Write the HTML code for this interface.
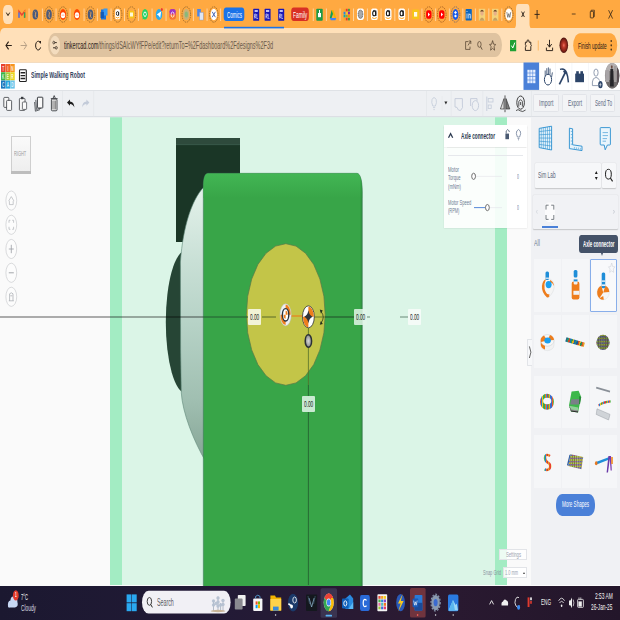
<!DOCTYPE html><html><head><meta charset="utf-8"><title>Tinkercad</title><style>
html,body{margin:0;padding:0;}
body{width:620px;height:620px;overflow:hidden;position:relative;background:#fafafa;font-family:"Liberation Sans",sans-serif;}
.a{position:absolute;}
.t{position:absolute;white-space:nowrap;transform-origin:0 50%;transform:scaleX(.5625);line-height:1;}
svg{position:absolute;left:0;top:0;overflow:visible;}
#tabbar{left:0;top:0;width:620px;height:40px;background:#ffa941;}
#addr{left:0;top:28.4px;width:620px;height:33.8px;background:#ffe0b9;border-top-left-radius:4px 6px;}
#pill{left:48px;top:33px;width:454px;height:24px;background:#dfc3a0;border-radius:7px/12px;}
#hdr{left:0;top:62px;width:620px;height:28px;background:#fff;border-top:1px solid #f3dcc0;box-sizing:border-box;}
#tool{left:0;top:90px;width:620px;height:27.3px;background:#eef0f3;border-bottom:1px solid #dcdfe4;border-top:1px solid #dfe2e6;box-sizing:border-box;}
#canvas{left:0;top:117px;width:531px;height:469px;background:#fafafa;overflow:hidden;}
#side{left:531px;top:117px;width:89px;height:468px;background:#f0f1f4;}
#task{left:0;top:585.5px;width:620px;height:34.5px;background:linear-gradient(90deg,#1b1830 0%,#221a36 35%,#2b1a32 65%,#23162a 100%);}
.sep{position:absolute;top:8px;width:1px;height:13px;background:#ffd29a;}
.card{position:absolute;background:#f5f6f8;width:26.6px;height:52.8px;}
.btn{position:absolute;background:#f3f4f6;border:1px solid #e2e4e9;box-sizing:border-box;border-radius:1.5px;}
</style></head><body>
<div id="tabbar" class="a"></div><div id="addr" class="a"></div><div id="pill" class="a"></div><div id="hdr" class="a"></div><div id="tool" class="a"></div>
<div id="canvas" class="a"><svg width="531" height="468" viewBox="0 117 531 468">
<defs>
<linearGradient id="wheelg" gradientUnits="userSpaceOnUse" x1="0" y1="187" x2="0" y2="460"><stop offset="0" stop-color="#e4f2eb"/><stop offset="0.27" stop-color="#c9e0d6"/><stop offset="0.49" stop-color="#b7d3c7"/><stop offset="0.78" stop-color="#a0bfb1"/><stop offset="1" stop-color="#86a596"/></linearGradient>
<linearGradient id="bodytop" x1="0" y1="0" x2="0" y2="1"><stop offset="0" stop-color="#42b654"/><stop offset="1" stop-color="#38a548"/></linearGradient>
<radialGradient id="greyb" cx="0.5" cy="0.5" r="0.5"><stop offset="0" stop-color="#d8d8d8"/><stop offset="1" stop-color="#8a8a8a"/></radialGradient>
</defs>
<rect x="110" y="117" width="397" height="468" fill="#a3ecc3"/>
<rect x="122" y="117" width="373" height="468" fill="#dbf5e7"/>
<rect x="0" y="117" width="531" height="0.3" fill="#e3e6ea"/>
<rect x="176" y="138" width="64" height="104" fill="#1a3626"/>
<rect x="176" y="138" width="64" height="6.5" fill="#2e4a3c"/>
<rect x="176" y="144.3" width="64" height="0.8" fill="#3e5e50"/>
<ellipse cx="186" cy="322" rx="20.2" ry="71.5" fill="#264535"/>
<path d="M206 185 C193 196 183 225 180.4 262 L180.6 350 L181.3 393 C182.5 412 193 440 206 462 Z" fill="url(#wheelg)" stroke="#5f8878" stroke-width="0.6"/>
<path d="M203.3 590 V185 C203.3 178 205 173.3 208 173.3 H357 C360 173.3 362.3 180 362.3 192 V590 Z" fill="#38a548" stroke="#3f6f5c" stroke-width="0.5"/>
<path d="M203.5 198 V185 C203.5 178 205 173.5 208 173.5 H357 C360 173.5 362.1 180 362.1 192 V198 Z" fill="url(#bodytop)"/>
<path d="M360.6 177 C361.6 180 362.2 186 362.2 192 V590 H360.6 Z" fill="#1f6a30" opacity="0.3"/>
<polygon points="285.8,243.7 296.0,246.1 305.5,253.2 313.7,264.4 319.9,279.1 323.9,296.2 325.2,314.5 323.9,332.8 319.9,349.9 313.7,364.6 305.5,375.8 296.0,382.9 285.8,385.3 275.6,382.9 266.1,375.8 257.9,364.6 251.7,349.9 247.7,332.8 246.4,314.5 247.7,296.2 251.7,279.1 257.9,264.4 266.1,253.2 275.6,246.1" fill="#c3c548" stroke="#5a7848" stroke-width="0.7"/>
<line x1="0" y1="317" x2="203" y2="317" stroke="#000" stroke-opacity="0.42" stroke-width="1.4"/>
<line x1="203" y1="317" x2="248" y2="317" stroke="#235a30" stroke-width="1"/>
<line x1="262" y1="317" x2="276" y2="317" stroke="#5a6a28" stroke-width="1"/>
<line x1="291" y1="316" x2="303" y2="316" stroke="#e8801e" stroke-width="1.2"/>
<line x1="314" y1="317" x2="325" y2="317" stroke="#6a7a28" stroke-width="1"/>
<line x1="325" y1="317" x2="354" y2="317" stroke="#235a30" stroke-width="1.2"/>
<line x1="367" y1="317" x2="370" y2="317" stroke="#6a8a78" stroke-width="1"/>
<line x1="400" y1="317" x2="408" y2="317" stroke="#6a8a78" stroke-width="1"/>
<line x1="308.4" y1="328" x2="308.4" y2="385" stroke="#55702a" stroke-width="0.8"/>
<line x1="308.4" y1="385" x2="308.4" y2="396" stroke="#235a30" stroke-width="0.8"/>
<line x1="308.4" y1="412" x2="308.4" y2="585" stroke="#235a30" stroke-width="0.8"/>
<!-- connector 1 -->
<g transform="translate(285.6 314.8)">
 <ellipse rx="5.6" ry="11" fill="#eef0f4" stroke="#b8c0cc" stroke-width="0.5"/>
 <path d="M0 0 L0 -10.2 A5.1 10.2 0 0 1 5.1 0 Z" fill="#ee7d1c"/>
 <path d="M0 0 L0 10.2 A5.1 10.2 0 0 1 -5.1 0 Z" fill="#ee7d1c"/>
 <ellipse rx="3.2" ry="6.2" fill="#fff" stroke="#2b3440" stroke-width="1.4"/>
 <path d="M0 0 L0 -4 A2 4 0 0 1 2 0 Z" fill="#ee7d1c"/>
 <path d="M0 0 L0 4 A2 4 0 0 1 -2 0 Z" fill="#ee7d1c"/>
</g>
<!-- connector 2 -->
<g transform="translate(308.4 316.8)">
 <ellipse rx="5.9" ry="11" fill="#fff" stroke="#2b3036" stroke-width="0.8"/>
 <path d="M0 0 L0 -10.4 A5.4 10.4 0 0 1 5.4 0 Z" fill="#ee7d1c"/>
 <path d="M0 0 L0 10.4 A5.4 10.4 0 0 1 -5.4 0 Z" fill="#ee7d1c"/>
 <path d="M0 -6.5 Q0.8 -1.4 4.2 0 Q0.8 1.4 0 6.5 Q-0.8 1.4 -4.2 0 Q-0.8 -1.4 0 -6.5 Z" fill="#30343a"/>
</g>
<g transform="translate(308.4 341)">
 <ellipse rx="3.2" ry="6.2" fill="url(#greyb)" stroke="#2b3036" stroke-width="1.5"/>
</g>
<path d="M321 311.5 Q325.5 317 321 323" fill="none" stroke="#2b3a22" stroke-width="0.8"/>
<path d="M319.8 309.6 l3 0.9 l-1.9 3 Z M319.8 324.8 l3 -0.9 l-1.9 -3 Z" fill="#22301c"/>
</svg>
<div class="a" style="left:247.7px;top:192px;width:13.8px;height:16px;background:#f2f3d6;border-radius:1px;"></div>
<div class="t" style="left:249.79999999999998px;top:195.5px;font-size:8.8px;color:#222;transform:scaleX(.54);">0.00</div>
<div class="a" style="left:353.8px;top:192px;width:12.8px;height:16px;background:rgba(225,245,232,0.85);border-radius:1px;"></div>
<div class="t" style="left:355.90000000000003px;top:195.5px;font-size:8.8px;color:#222;transform:scaleX(.54);">0.00</div>
<div class="a" style="left:408px;top:192px;width:13px;height:16px;background:#f4fbf7;border-radius:1px;"></div>
<div class="t" style="left:410.1px;top:195.5px;font-size:8.8px;color:#222;transform:scaleX(.54);">0.00</div>
<div class="a" style="left:301.6px;top:279px;width:13.2px;height:16px;background:rgba(214,240,222,0.92);border-radius:1px;"></div>
<div class="t" style="left:303.70000000000005px;top:282.5px;font-size:8.8px;color:#222;transform:scaleX(.54);">0.00</div>
<div class="a" style="left:10.5px;top:18.5px;width:20px;height:36px;background:linear-gradient(#fafafa,#eeeeee);border:0.6px solid #cfcfcf;box-sizing:border-box;"></div>
<div class="a" style="left:10.5px;top:54.3px;width:20px;height:2.6px;background:#bdbdbd;"></div>
<div class="t" style="left:14px;top:33px;font-size:7.5px;color:#9a9a9a;transform:scaleX(.52);">RIGHT</div>
<svg width="531" height="468" viewBox="0 117 531 468"><ellipse cx="11.3" cy="200.6" rx="5.4" ry="9.6" fill="#fcfcfc" stroke="#c2c4c8" stroke-width="0.6"/><ellipse cx="11.3" cy="224.8" rx="5.4" ry="9.6" fill="#fcfcfc" stroke="#c2c4c8" stroke-width="0.6"/><ellipse cx="11.3" cy="249" rx="5.4" ry="9.6" fill="#fcfcfc" stroke="#c2c4c8" stroke-width="0.6"/><ellipse cx="11.3" cy="272.8" rx="5.4" ry="9.6" fill="#fcfcfc" stroke="#c2c4c8" stroke-width="0.6"/><ellipse cx="11.3" cy="296.8" rx="5.4" ry="9.6" fill="#fcfcfc" stroke="#c2c4c8" stroke-width="0.6"/><path d="M8.6 201.1 L11.3 196.6 L14 201.1 M9.4 201.1 V204.6 H13.2 V201.1" fill="none" stroke="#b0b3b8" stroke-width="0.7"/><path d="M9 222.8 V220.3 H10.4 M12.2 220.3 H13.6 V222.8 M13.6 226.8 V229.3 H12.2 M10.4 229.3 H9 V226.8" fill="none" stroke="#b0b3b8" stroke-width="0.7"/><path d="M8.8 249 H13.8 M11.3 244.8 V253.2" fill="none" stroke="#9a9da3" stroke-width="0.8"/><path d="M8.8 272.8 H13.8" fill="none" stroke="#9a9da3" stroke-width="0.9"/><path d="M9.6 300.8 V293.8 Q11.3 291.8 13 293.8 V300.8 M8.8 300.8 H13.8 M10.3 295.8 H12.3" fill="none" stroke="#a4a7ad" stroke-width="0.7"/></svg>
</div>
<svg width="620" height="62" viewBox="0 0 620 62"><rect x="3" y="5" width="10" height="19" rx="3.5" ry="6" fill="#ffe0b9"/><path d="M6.3 12.6 L8 15.6 L9.7 12.6" fill="none" stroke="#3a2a18" stroke-width="1"/><path d="M19 17.8 V11.4 L21.8 15 L24.6 11.4 V17.8" fill="none" stroke="#ea4335" stroke-width="1.4"/><path d="M19 17.8 V12.4" stroke="#4285f4" stroke-width="1.4"/><path d="M24.6 17.8 V12.4" stroke="#34a853" stroke-width="1.4"/><path d="M24.9 11.6 l-0.8 -0.6" stroke="#fbbc04" stroke-width="1.1"/><rect x="28.6" y="8.5" width="0.9" height="12.5" fill="#ffd8a8"/><ellipse cx="35.3" cy="14.5" rx="2.8" ry="5" fill="#4a5a7c"/><path d="M34.699999999999996 11.5 q1.8 1 0.8 2.8 q-1 2 0.8 3.6" stroke="#e8a860" stroke-width="0.9" fill="none"/><rect x="41.9" y="8.5" width="0.9" height="12.5" fill="#ffd8a8"/><ellipse cx="49" cy="14.5" rx="2.8" ry="5" fill="#4a5a7c"/><path d="M48.4 11.5 q1.8 1 0.8 2.8 q-1 2 0.8 3.6" stroke="#e8a860" stroke-width="0.9" fill="none"/><ellipse cx="49" cy="14.5" rx="4.3" ry="7.7" fill="none" stroke="#6a4a20" stroke-width="0.6" stroke-dasharray="1.5 0.9"/><rect x="55.6" y="8.5" width="0.9" height="12.5" fill="#ffd8a8"/><ellipse cx="63" cy="14.5" rx="3.1" ry="5.4" fill="#ff4500"/><ellipse cx="63" cy="15.3" rx="2.2" ry="3" fill="#fff"/><ellipse cx="62.1" cy="15.1" rx="0.4" ry="0.7" fill="#ff4500"/><ellipse cx="63.9" cy="15.1" rx="0.4" ry="0.7" fill="#ff4500"/><ellipse cx="63" cy="14.5" rx="4.3" ry="7.7" fill="none" stroke="#6a4a20" stroke-width="0.6" stroke-dasharray="1.5 0.9"/><rect x="69.6" y="8.5" width="0.9" height="12.5" fill="#ffd8a8"/><ellipse cx="77" cy="14.5" rx="3.1" ry="5.4" fill="#ff4500"/><ellipse cx="77" cy="15.3" rx="2.2" ry="3" fill="#fff"/><ellipse cx="76.1" cy="15.1" rx="0.4" ry="0.7" fill="#ff4500"/><ellipse cx="77.9" cy="15.1" rx="0.4" ry="0.7" fill="#ff4500"/><rect x="83.6" y="8.5" width="0.9" height="12.5" fill="#ffd8a8"/><ellipse cx="90.5" cy="14.5" rx="2.8" ry="5" fill="#4a5a7c"/><path d="M89.9 11.5 q1.8 1 0.8 2.8 q-1 2 0.8 3.6" stroke="#e8a860" stroke-width="0.9" fill="none"/><ellipse cx="90.5" cy="14.5" rx="4.3" ry="7.7" fill="none" stroke="#6a4a20" stroke-width="0.6" stroke-dasharray="1.5 0.9"/><rect x="96.89999999999999" y="8.5" width="0.9" height="12.5" fill="#ffd8a8"/><rect x="101" y="9.5" width="5" height="10" fill="#1a73d8"/><rect x="103.5" y="8.5" width="4" height="7" fill="#3a9af0"/><rect x="100.5" y="12" width="3.4" height="6" fill="#0f5ab8"/><rect x="110.6" y="8.5" width="0.9" height="12.5" fill="#ffd8a8"/><rect x="115.1" y="9.3" width="5" height="10" rx="1.4" ry="2.4" fill="#fff"/><ellipse cx="117.5" cy="13.5" rx="1.1" ry="2" fill="none" stroke="#222" stroke-width="0.9"/><path d="M118.69999999999999 11.7 V15.8" stroke="#222" stroke-width="0.8"/><path d="M115.8 17.1 Q117.6 18.9 119.39999999999999 17.1" stroke="#f90" stroke-width="0.9" fill="none"/><ellipse cx="117.6" cy="14.5" rx="4.3" ry="7.7" fill="none" stroke="#6a4a20" stroke-width="0.6" stroke-dasharray="1.5 0.9"/><rect x="124.1" y="8.5" width="0.9" height="12.5" fill="#ffd8a8"/><rect x="128.9" y="10.7" width="5.2" height="7.6" rx="1" ry="1.6" fill="#f7c518"/><rect x="130.0" y="12.5" width="3" height="4" fill="#fff8d8"/><ellipse cx="131.5" cy="14.5" rx="4.3" ry="7.7" fill="none" stroke="#6a4a20" stroke-width="0.6" stroke-dasharray="1.5 0.9"/><rect x="137.9" y="8.5" width="0.9" height="12.5" fill="#ffd8a8"/><ellipse cx="145" cy="14.3" rx="3" ry="5.2" fill="#25d366"/><path d="M142.4 19.6 L143 17 L144.4 18.4 Z" fill="#25d366"/><ellipse cx="145" cy="14.2" rx="1.6" ry="2.8" fill="#fff"/><ellipse cx="145" cy="14.2" rx="0.9" ry="1.6" fill="#25d366"/><rect x="151.6" y="8.5" width="0.9" height="12.5" fill="#ffd8a8"/><ellipse cx="159" cy="14.5" rx="3.2" ry="5.4" fill="#2aabee"/><path d="M156.8 14.5 L161.2 11.2 L160.2 18 L158.8 15.8 Z" fill="#fff"/><ellipse cx="161.8" cy="9.5" rx="1" ry="1.6" fill="#e33"/><rect x="165.6" y="8.5" width="0.9" height="12.5" fill="#ffd8a8"/><rect x="169.6" y="9.2" width="6" height="10" rx="1.7" ry="2.8" fill="#d62976"/><rect x="169.6" y="14.4" width="6" height="4.8" rx="1.7" ry="2.6" fill="#f77a2a"/><rect x="169.6" y="9.2" width="6" height="4.4" rx="1.7" ry="2.6" fill="#9a35c8"/><ellipse cx="172.6" cy="14.6" rx="1.5" ry="2.6" fill="none" stroke="#fff" stroke-width="0.8"/><rect x="179.1" y="8.5" width="0.9" height="12.5" fill="#ffd8a8"/><ellipse cx="186.3" cy="14.5" rx="3.1" ry="5.6" fill="#c8b078"/><ellipse cx="186.3" cy="14.5" rx="1.6" ry="3" fill="#8ab87a"/><ellipse cx="186.3" cy="14.5" rx="4.3" ry="7.7" fill="none" stroke="#6a4a20" stroke-width="0.6" stroke-dasharray="1.5 0.9"/><rect x="192.9" y="8.5" width="0.9" height="12.5" fill="#ffd8a8"/><rect x="197.2" y="9" width="3.6" height="7.5" fill="#4a86e8"/><rect x="199.6" y="12.5" width="3.6" height="7.5" fill="#dfe6f3" stroke="#7a9ad8" stroke-width="0.4"/><rect x="206.6" y="8.5" width="0.9" height="12.5" fill="#ffd8a8"/><ellipse cx="213.8" cy="14.5" rx="3.2" ry="5.8" fill="#fff"/><path d="M212.2 11.8 L215.4 17.2 M215.4 11.8 L212.2 17.2" stroke="#3a5aa8" stroke-width="0.9"/><ellipse cx="213.8" cy="14.5" rx="4.3" ry="7.7" fill="none" stroke="#6a4a20" stroke-width="0.6" stroke-dasharray="1.5 0.9"/><rect x="223.7" y="7.5" width="20.6" height="13.5" rx="2.5" ry="4" fill="#1a73e8"/><rect x="253.2" y="8.8" width="6" height="12" rx="0.6" fill="#1818b8"/><rect x="254.6" y="10.2" width="3.2" height="1.6" fill="#e8e8ff"/><path d="M254.6 18.5 V14 h1.3 v2 h-1.3 l1.5 2.5 M256.8 14 V18.5 h1.3" stroke="#fff" stroke-width="0.55" fill="none"/><rect x="264.6" y="8.8" width="6" height="12" rx="0.6" fill="#1818b8"/><rect x="266.0" y="10.2" width="3.2" height="1.6" fill="#e8e8ff"/><path d="M266.0 18.5 V14 h1.3 v2 h-1.3 l1.5 2.5 M268.20000000000005 14 V18.5 h1.3" stroke="#fff" stroke-width="0.55" fill="none"/><rect x="278.2" y="8.8" width="6" height="12" rx="0.6" fill="#1818b8"/><rect x="279.59999999999997" y="10.2" width="3.2" height="1.6" fill="#e8e8ff"/><path d="M279.59999999999997 18.5 V14 h1.3 v2 h-1.3 l1.5 2.5 M281.8 14 V18.5 h1.3" stroke="#fff" stroke-width="0.55" fill="none"/><rect x="224" y="26.8" width="60" height="1.6" fill="#1a73e8"/><rect x="291.2" y="7.5" width="17.6" height="13.5" rx="2.5" ry="4" fill="#d93025"/><rect x="316.3" y="8.8" width="6.4" height="12" rx="0.8" fill="#1e9a48"/><rect x="318" y="13" width="3" height="4.2" fill="#fff"/><rect x="319" y="10" width="1" height="3" fill="#fff"/><rect x="325.90000000000003" y="8.5" width="0.9" height="12.5" fill="#ffd8a8"/><path d="M331.6 10 L329.8 18 H331.6 L333.6 12 Z" fill="#0f9d58"/><path d="M331.6 10 H333.4 L336.2 18 H334.4 Z" fill="#f4b400"/><path d="M329.8 18 L330.8 20.3 H335.4 L336.2 18 Z" fill="#4285f4"/><rect x="339.6" y="8.5" width="0.9" height="12.5" fill="#ffd8a8"/><rect x="343.6" y="8.8" width="1.9" height="2.6" fill="#f9a825"/><rect x="345.8" y="8.8" width="1.9" height="2.6" fill="#e53935"/><rect x="348.0" y="8.8" width="1.9" height="2.6" fill="#43a047"/><rect x="343.6" y="11.8" width="1.9" height="2.6" fill="#1e88e5"/><rect x="345.8" y="11.8" width="1.9" height="2.6" fill="#fbc02d"/><rect x="348.0" y="11.8" width="1.9" height="2.6" fill="#8e24aa"/><rect x="343.6" y="14.8" width="1.9" height="2.6" fill="#00acc1"/><rect x="345.8" y="14.8" width="1.9" height="2.6" fill="#7cb342"/><rect x="348.0" y="14.8" width="1.9" height="2.6" fill="#fb8c00"/><rect x="343.6" y="17.8" width="1.9" height="2.6" fill="#f9a825"/><rect x="345.8" y="17.8" width="1.9" height="2.6" fill="#e53935"/><rect x="348.0" y="17.8" width="1.9" height="2.6" fill="#43a047"/><rect x="353.1" y="8.5" width="0.9" height="12.5" fill="#ffd8a8"/><rect x="357" y="8.4" width="7" height="11.6" rx="1.7" ry="2.8" fill="#fff"/><ellipse cx="360.5" cy="14.2" rx="2.3" ry="4.2" fill="#aaa" stroke="#555" stroke-width="0.9" stroke-dasharray="1.1 0.6"/><rect x="371.0" y="8.399999999999999" width="6.8" height="11.6" rx="1.6" ry="2.6" fill="#fff"/><ellipse cx="374.2" cy="13.399999999999999" rx="1.5" ry="2.4" fill="none" stroke="#1a1a1a" stroke-width="1.1"/><path d="M375.9 10.6 V16.0" stroke="#1a1a1a" stroke-width="1"/><path d="M373.0 11.0 Q374.4 9.799999999999999 375.9 11.2" stroke="#1a1a1a" stroke-width="0.9" fill="none"/><path d="M372.0 17.599999999999998 Q374.4 19.6 376.79999999999995 17.599999999999998" stroke="#f90" stroke-width="0.9" fill="none"/><rect x="384.70000000000005" y="8.399999999999999" width="6.8" height="11.6" rx="1.6" ry="2.6" fill="#fff"/><ellipse cx="387.90000000000003" cy="13.399999999999999" rx="1.5" ry="2.4" fill="none" stroke="#1a1a1a" stroke-width="1.1"/><path d="M389.6 10.6 V16.0" stroke="#1a1a1a" stroke-width="1"/><path d="M386.70000000000005 11.0 Q388.1 9.799999999999999 389.6 11.2" stroke="#1a1a1a" stroke-width="0.9" fill="none"/><path d="M385.70000000000005 17.599999999999998 Q388.1 19.6 390.5 17.599999999999998" stroke="#f90" stroke-width="0.9" fill="none"/><rect x="398.40000000000003" y="8.399999999999999" width="6.8" height="11.6" rx="1.6" ry="2.6" fill="#fff"/><ellipse cx="401.6" cy="13.399999999999999" rx="1.5" ry="2.4" fill="none" stroke="#1a1a1a" stroke-width="1.1"/><path d="M403.3 10.6 V16.0" stroke="#1a1a1a" stroke-width="1"/><path d="M400.40000000000003 11.0 Q401.8 9.799999999999999 403.3 11.2" stroke="#1a1a1a" stroke-width="0.9" fill="none"/><path d="M399.40000000000003 17.599999999999998 Q401.8 19.6 404.2 17.599999999999998" stroke="#f90" stroke-width="0.9" fill="none"/><rect x="312.8" y="8.5" width="0.9" height="12.5" fill="#ffd8a8"/><rect x="366.90000000000003" y="8.5" width="0.9" height="12.5" fill="#ffd8a8"/><rect x="380.6" y="8.5" width="0.9" height="12.5" fill="#ffd8a8"/><rect x="394.40000000000003" y="8.5" width="0.9" height="12.5" fill="#ffd8a8"/><rect x="408.1" y="8.5" width="0.9" height="12.5" fill="#ffd8a8"/><rect x="421.5" y="8.5" width="0.9" height="12.5" fill="#ffd8a8"/><rect x="435.20000000000005" y="8.5" width="0.9" height="12.5" fill="#ffd8a8"/><rect x="448.90000000000003" y="8.5" width="0.9" height="12.5" fill="#ffd8a8"/><rect x="462.40000000000003" y="8.5" width="0.9" height="12.5" fill="#ffd8a8"/><rect x="220.2" y="8.5" width="0.9" height="12.5" fill="#ffd8a8"/><rect x="412.1" y="9.4" width="7" height="9.6" rx="0.8" fill="#f7c518"/><rect x="414" y="12" width="3.2" height="4.6" fill="#fffbe8"/><rect x="426.1" y="10.2" width="5.4" height="8.6" rx="1.6" ry="2.6" fill="#f00"/><path d="M428.0 12.6 L430.0 14.5 L428.0 16.4 Z" fill="#fff"/><ellipse cx="428.8" cy="14.5" rx="4.3" ry="7.7" fill="none" stroke="#7a3a10" stroke-width="0.6" stroke-dasharray="1.5 0.9"/><rect x="439.1" y="10.2" width="5.4" height="8.6" rx="1.6" ry="2.6" fill="#f00"/><path d="M441.0 12.6 L443.0 14.5 L441.0 16.4 Z" fill="#fff"/><ellipse cx="441.8" cy="14.5" rx="4.3" ry="7.7" fill="none" stroke="#7a3a10" stroke-width="0.6" stroke-dasharray="1.5 0.9"/><ellipse cx="455.5" cy="14.5" rx="3" ry="5.4" fill="#1a5ae8"/><path d="M454 12.5 l1.5 -1.5 l1.5 1.5 l-1.5 1.5 Z M454 16 l1.5 -1.5 l1.5 1.5 l-1.5 1.5 Z" fill="#fff"/><ellipse cx="455.5" cy="14.5" rx="4.3" ry="7.7" fill="none" stroke="#3a4a78" stroke-width="0.6" stroke-dasharray="1.5 0.9"/><rect x="465.6" y="9" width="6.2" height="11.5" rx="0.8" fill="#0a66c2"/><path d="M467 13.5 V18.5 M467 11 v1 M468.8 18.5 V13.5 M468.8 15 q1.6 -2.5 1.8 0.5 V18.5" stroke="#fff" stroke-width="0.7" fill="none"/><rect x="474.90000000000003" y="8.5" width="0.9" height="12.5" fill="#ffd8a8"/><rect x="478.8" y="8.8" width="6.4" height="12" fill="#f3d27a"/><ellipse cx="482" cy="13" rx="1.7" ry="2.8" fill="#e8b088"/><path d="M479.4 20.8 Q482 14 484.6 20.8 Z" fill="#c8a060"/><path d="M480 11.5 Q482 8 484 11.5" fill="#6a4a2a"/><rect x="488.40000000000003" y="8.5" width="0.9" height="12.5" fill="#ffd8a8"/><rect x="492.0" y="8.8" width="6.4" height="12" fill="#f3d27a"/><ellipse cx="495.2" cy="13" rx="1.7" ry="2.8" fill="#e8b088"/><path d="M492.59999999999997 20.8 Q495.2 14 497.8 20.8 Z" fill="#c8a060"/><path d="M493.2 11.5 Q495.2 8 497.2 11.5" fill="#6a4a2a"/><rect x="501.40000000000003" y="8.5" width="0.9" height="12.5" fill="#ffd8a8"/><ellipse cx="508.8" cy="14.5" rx="3.4" ry="6" fill="#fff"/><path d="M506.8 12 L507.8 17.4 L508.8 13.6 L509.8 17.4 L510.8 12" stroke="#444" stroke-width="0.6" fill="none"/><ellipse cx="508.8" cy="14.5" rx="4.3" ry="7.7" fill="none" stroke="#5a4a30" stroke-width="0.6" stroke-dasharray="1.5 0.9"/><path d="M512.5 29 Q516 29 516 24 V9 Q516 4 518.5 4 H527 Q529.5 4 529.5 9 V24 Q529.5 29 533 29 Z" fill="#ffe0b9"/><path d="M521.6 11.6 L524.4 17 M524.4 11.6 L521.6 17" stroke="#2a2018" stroke-width="0.9"/><path d="M534.5 14.4 H539.7 M537.1 10 V18.8" stroke="#2a2018" stroke-width="0.9"/><path d="M571.8 14 H575.6" stroke="#3a2a18" stroke-width="0.8"/><rect x="590.3" y="11.3" width="3.2" height="6.6" rx="0.6" fill="none" stroke="#3a2a18" stroke-width="0.8"/><path d="M591.2 11.3 V10.2 H594.4 V16.6 H593.5" fill="none" stroke="#3a2a18" stroke-width="0.7"/><path d="M608.6 10.2 L612.6 18.6 M612.6 10.2 L608.6 18.6" stroke="#3a2a18" stroke-width="0.8"/><path d="M6 45.5 H11.8 M8.6 41.6 L6 45.5 L8.6 49.4" fill="none" stroke="#2a2018" stroke-width="1.1"/><path d="M20.6 45.5 H26.6 M24 41.6 L26.6 45.5 L24 49.4" fill="none" stroke="#b09a80" stroke-width="0.9"/><path d="M40.4 43.2 A2.6 4.4 0 1 0 40.6 47.4" fill="none" stroke="#2a2018" stroke-width="1"/><path d="M39 41 H41 V44 Z" fill="#2a2018"/><ellipse cx="55" cy="45.2" rx="5" ry="9.4" fill="#f3dcbe"/><path d="M53 42.6 H56.8 M53 47.8 H55 M56.4 47.8 H57.4" stroke="#2a2018" stroke-width="0.9"/><ellipse cx="53.8" cy="42.6" rx="0.9" ry="1.4" fill="#f3dcbe" stroke="#2a2018" stroke-width="0.7"/><ellipse cx="56.2" cy="47.8" rx="0.9" ry="1.4" fill="#f3dcbe" stroke="#2a2018" stroke-width="0.7"/><path d="M468.4 41.6 H465.6 V49.4 H470 V46.6 M468 45.4 L470.6 41.2 M468.8 41 H470.8 V44" fill="none" stroke="#4a3a28" stroke-width="0.7"/><ellipse cx="479.4" cy="44.4" rx="1.7" ry="2.9" fill="none" stroke="#4a3a28" stroke-width="0.7"/><path d="M480.6 46.6 L482.2 49.6" stroke="#4a3a28" stroke-width="0.8"/><path d="M492.6 40.6 L493.6 44.2 L495.6 44.4 L494.1 46.6 L494.6 50.2 L492.6 48.4 L490.6 50.2 L491.1 46.6 L489.6 44.4 L491.6 44.2 Z" fill="none" stroke="#4a3a28" stroke-width="0.7"/><rect x="510" y="40" width="6.2" height="11.2" rx="0.5" fill="#1fa035"/><path d="M511.4 45.6 L512.8 48 L514.8 42.6" fill="none" stroke="#fff" stroke-width="1"/><path d="M525.4 42.2 H527 Q526.8 39.8 528 39.8 Q529.2 39.8 529 42.2 H530.8 V44.6 Q532 45.4 530.8 46.6 V50.4 H525.4 V47.4 Q526.8 45.8 525.4 44.6 Z" fill="none" stroke="#2a2018" stroke-width="0.95"/><rect x="537.8" y="40.5" width="0.8" height="10" fill="#ffb050"/><path d="M549.5 39.8 V47 M547.3 44 L549.5 47.2 L551.7 44 M546.4 47.6 V50.6 H552.6 V47.6" fill="none" stroke="#2a2018" stroke-width="0.95"/><defs><radialGradient id="pf" cx="0.5" cy="0.5" r="0.5"><stop offset="0" stop-color="#f07868"/><stop offset="0.3" stop-color="#c03a2a"/><stop offset="0.7" stop-color="#8a2418"/><stop offset="1" stop-color="#4a1410"/></radialGradient></defs><ellipse cx="563.8" cy="45.3" rx="4.3" ry="7.7" fill="url(#pf)"/><rect x="573.2" y="33.2" width="44" height="24" rx="7" ry="12" fill="#ffa941"/><ellipse cx="611.2" cy="41" rx="0.65" ry="1.1" fill="#2a2018"/><ellipse cx="611.2" cy="45.3" rx="0.65" ry="1.1" fill="#2a2018"/><ellipse cx="611.2" cy="49.6" rx="0.65" ry="1.1" fill="#2a2018"/></svg>
<div class="t" style="left:226.7px;top:9.65px;font-size:9.5px;color:#fff;font-weight:normal;transform:scaleX(0.4736);">Comics</div>
<div class="t" style="left:293.2px;top:9.65px;font-size:9.5px;color:#fff;font-weight:normal;transform:scaleX(0.5112);">Family</div>
<div class="t" style="left:63.7px;top:40.80px;font-size:10px;color:#6a5a48;font-weight:normal;transform:scaleX(0.551);"><span style="color:#2a2018">tinkercad.com</span>/things/dSAlcWYfFPe/edit?returnTo=%2Fdashboard%2Fdesigns%2F3d</div>
<div class="t" style="left:578px;top:40.70px;font-size:9.6px;color:#2a2018;font-weight:normal;transform:scaleX(0.4979);">Finish update</div>
<svg width="620" height="120" viewBox="0 0 620 120"><rect x="1.00" y="64.00" width="4.5" height="8.1" fill="#e8432e"/><rect x="5.62" y="64.00" width="4.5" height="8.1" fill="#f2652a"/><rect x="10.24" y="64.00" width="4.5" height="8.1" fill="#f7951f"/><rect x="1.00" y="72.25" width="4.5" height="8.1" fill="#3bb54a"/><rect x="5.62" y="72.25" width="4.5" height="8.1" fill="#a6ce39"/><rect x="10.24" y="72.25" width="4.5" height="8.1" fill="#e8d41e"/><rect x="1.00" y="80.50" width="4.5" height="8.1" fill="#1b75bc"/><rect x="5.62" y="80.50" width="4.5" height="8.1" fill="#27a3dc"/><rect x="10.24" y="80.50" width="4.5" height="8.1" fill="#6ac4ea"/><text x="3.25" y="70.60" font-size="6.4" font-weight="bold" fill="#fff" fill-opacity="0.85" text-anchor="middle" font-family="Liberation Sans" transform="translate(1.62 0) scale(0.5 1)">T</text><text x="7.87" y="70.60" font-size="6.4" font-weight="bold" fill="#fff" fill-opacity="0.85" text-anchor="middle" font-family="Liberation Sans" transform="translate(3.94 0) scale(0.5 1)">I</text><text x="12.49" y="70.60" font-size="6.4" font-weight="bold" fill="#fff" fill-opacity="0.85" text-anchor="middle" font-family="Liberation Sans" transform="translate(6.25 0) scale(0.5 1)">N</text><text x="3.25" y="78.85" font-size="6.4" font-weight="bold" fill="#fff" fill-opacity="0.85" text-anchor="middle" font-family="Liberation Sans" transform="translate(1.62 0) scale(0.5 1)">K</text><text x="7.87" y="78.85" font-size="6.4" font-weight="bold" fill="#fff" fill-opacity="0.85" text-anchor="middle" font-family="Liberation Sans" transform="translate(3.94 0) scale(0.5 1)">E</text><text x="12.49" y="78.85" font-size="6.4" font-weight="bold" fill="#fff" fill-opacity="0.85" text-anchor="middle" font-family="Liberation Sans" transform="translate(6.25 0) scale(0.5 1)">R</text><text x="3.25" y="87.10" font-size="6.4" font-weight="bold" fill="#fff" fill-opacity="0.85" text-anchor="middle" font-family="Liberation Sans" transform="translate(1.62 0) scale(0.5 1)">C</text><text x="7.87" y="87.10" font-size="6.4" font-weight="bold" fill="#fff" fill-opacity="0.85" text-anchor="middle" font-family="Liberation Sans" transform="translate(3.94 0) scale(0.5 1)">A</text><text x="12.49" y="87.10" font-size="6.4" font-weight="bold" fill="#fff" fill-opacity="0.85" text-anchor="middle" font-family="Liberation Sans" transform="translate(6.25 0) scale(0.5 1)">D</text><rect x="19.5" y="69.7" width="6.8" height="11.8" rx="0.8" fill="#fff" stroke="#222" stroke-width="1.1"/><path d="M20.6 72.7 H25.2 M20.6 75.6 H25.2 M20.6 78.5 H25.2" stroke="#222" stroke-width="1.4"/><rect x="523.5" y="62.5" width="15.6" height="27.4" fill="#4a80d8"/><rect x="527.40" y="69.80" width="2.3" height="2.9" fill="#e8f0ff"/><rect x="530.25" y="69.80" width="2.3" height="2.9" fill="#e8f0ff"/><rect x="533.10" y="69.80" width="2.3" height="2.9" fill="#e8f0ff"/><rect x="527.40" y="73.30" width="2.3" height="2.9" fill="#e8f0ff"/><rect x="530.25" y="73.30" width="2.3" height="2.9" fill="#e8f0ff"/><rect x="533.10" y="73.30" width="2.3" height="2.9" fill="#e8f0ff"/><rect x="527.40" y="76.80" width="2.3" height="2.9" fill="#e8f0ff"/><rect x="530.25" y="76.80" width="2.3" height="2.9" fill="#e8f0ff"/><rect x="533.10" y="76.80" width="2.3" height="2.9" fill="#e8f0ff"/><rect x="527.40" y="80.30" width="2.3" height="2.9" fill="#e8f0ff"/><rect x="530.25" y="80.30" width="2.3" height="2.9" fill="#e8f0ff"/><rect x="533.10" y="80.30" width="2.3" height="2.9" fill="#e8f0ff"/><rect x="555.4" y="63" width="0.5" height="27" fill="#eceef2"/><rect x="571.7" y="63" width="0.5" height="27" fill="#eceef2"/><rect x="588" y="63" width="0.5" height="27" fill="#eceef2"/><ellipse cx="548" cy="79.6" rx="3.6" ry="5.4" fill="none" stroke="#2c4468" stroke-width="1"/><path d="M545.2 76 V70.5 M546.8 74.6 V68.2 M548.4 74.4 V67.4 M550 74.8 V68.6 M551.6 77 L552.4 72.4" stroke="#2c4468" stroke-width="0.8" fill="none"/><path d="M559.4 84.4 L565.2 72.6" stroke="#2c4468" stroke-width="1.7"/><path d="M560 69.4 Q564.6 68 566.4 72.4 Q568 76 568.4 82.4" fill="none" stroke="#2c4468" stroke-width="1.5"/><path d="M563.6 71 L566.6 73.6" stroke="#2c4468" stroke-width="2"/><rect x="575.2" y="73.6" width="8.8" height="8.6" fill="#2c4468"/><rect x="576.2" y="71.2" width="2.6" height="3" fill="#2c4468"/><rect x="580.4" y="71.2" width="2.6" height="3" fill="#2c4468"/><ellipse cx="596" cy="72.6" rx="2.1" ry="3.6" fill="none" stroke="#7a88a0" stroke-width="0.8"/><path d="M592.4 85.6 V82 Q592.6 77.8 596 77.4 Q598.6 77.8 599.6 80.6 M592.4 85.6 H598" fill="none" stroke="#7a88a0" stroke-width="0.8"/><ellipse cx="600.4" cy="84.7" rx="2.2" ry="3.6" fill="#2c4468"/><path d="M599.2 84.7 H601.6 M600.4 82.8 V86.6" stroke="#fff" stroke-width="0.55"/><defs><radialGradient id="av" cx="0.5" cy="0.45" r="0.6"><stop offset="0" stop-color="#9a9494"/><stop offset="0.6" stop-color="#6e6a6c"/><stop offset="1" stop-color="#4a4648"/></radialGradient></defs><clipPath id="avc"><ellipse cx="612.15" cy="75.8" rx="7.25" ry="12.7"/></clipPath><g clip-path="url(#avc)"><rect x="604" y="62" width="17" height="28" fill="#8e8a8a"/><rect x="604" y="62" width="17" height="9" fill="#b4b0b0"/><rect x="604" y="80" width="17" height="10" fill="#6e6a6a"/><rect x="605.4" y="70" width="3.6" height="12" fill="#a8a4a6"/><rect x="614" y="66" width="2.6" height="16" fill="#a09c9c"/><rect x="617" y="68" width="3" height="20" fill="#5a5054"/><path d="M610.4 69.6 Q611.8 67.4 613.2 69.6 L613.8 86.6 H610 Z" fill="#26262a"/><ellipse cx="611.8" cy="66.8" rx="0.9" ry="1.5" fill="#6a4a40"/></g><rect x="3.8" y="97.4" width="5" height="10" rx="0.8" fill="#f7f7f7" stroke="#3a3d42" stroke-width="0.8"/><rect x="6.6" y="100.4" width="5" height="10" rx="0.8" fill="#fbfbfb" stroke="#3a3d42" stroke-width="0.8"/><rect x="19.4" y="98.4" width="5.6" height="12" rx="0.8" fill="#f7f7f7" stroke="#3a3d42" stroke-width="0.8"/><rect x="21" y="96.8" width="2.4" height="2.4" fill="#3a3d42"/><rect x="22.4" y="102" width="4.2" height="7.4" rx="0.6" fill="#fbfbfb" stroke="#3a3d42" stroke-width="0.7"/><path d="M34.6 102 L35.4 111.2 L40 109.6" fill="none" stroke="#3a3d42" stroke-width="0.8"/><path d="M35.8 99.8 L36.4 109.4 L41 108.2" fill="none" stroke="#3a3d42" stroke-width="0.8"/><rect x="37.4" y="97.2" width="5.4" height="10.8" rx="0.6" fill="#f9f9f9" stroke="#3a3d42" stroke-width="1"/><rect x="51.4" y="99" width="5.6" height="11.8" rx="1" fill="#f0f0f0" stroke="#3a3d42" stroke-width="0.9"/><path d="M50.8 98.6 H57.6 M53 98.4 L54.2 95.6 L55.4 98.4" fill="none" stroke="#3a3d42" stroke-width="0.9"/><path d="M52.9 100.6 V109.4 M54.2 100.6 V109.4 M55.5 100.6 V109.4" stroke="#5a5a5a" stroke-width="0.65"/><rect x="62" y="91" width="0.6" height="25.5" fill="#e2e4e8"/><rect x="93.5" y="91" width="0.6" height="25.5" fill="#e2e4e8"/><path d="M67 102.6 L70 99.6 V101.6 Q74 101.6 74.4 107.6 Q73 104.2 70 104 V105.8 Z" fill="#1e1e1e"/><path d="M89.4 102.6 L86.4 99.6 V101.6 Q82.4 101.6 82 107.6 Q83.4 104.2 86.4 104 V105.8 Z" fill="#c3cbd9"/><rect x="426.4" y="91" width="0.6" height="25.5" fill="#e2e4e8"/><rect x="450.8" y="91" width="0.6" height="25.5" fill="#e2e4e8"/><rect x="482.6" y="91" width="0.6" height="25.5" fill="#e2e4e8"/><rect x="531.2" y="91" width="0.6" height="25.5" fill="#e2e4e8"/><rect x="441.8" y="96" width="0.5" height="15" fill="#e4e6ea"/><path d="M432.8 106 Q431.2 102.6 432 99.6 Q434 95.6 436.2 99.6 Q437 102.6 435.4 106 Z M433 107.6 H435.2 M433.4 109.6 H434.8" fill="none" stroke="#c3cbd9" stroke-width="0.8"/><path d="M444.4 101.6 H447.4 L445.9 104.6 Z" fill="#2a2a2a"/><path d="M455 98.6 H462.4 V104 Q463.6 108 460.4 110.6 Q458 111 457 107.4 L455 107 Z" fill="none" stroke="#c3cbd9" stroke-width="0.9"/><path d="M470.6 98.6 H477 V101" fill="none" stroke="#c3cbd9" stroke-width="0.9"/><ellipse cx="475.4" cy="105.6" rx="3.2" ry="5" fill="none" stroke="#c3cbd9" stroke-width="0.9"/><path d="M470.6 98.6 V106" stroke="#c3cbd9" stroke-width="0.9"/><path d="M486.8 96.6 V111" stroke="#c3cbd9" stroke-width="0.9"/><rect x="488.2" y="98.6" width="4.8" height="3.4" fill="none" stroke="#c3cbd9" stroke-width="0.8"/><rect x="488.2" y="105" width="3" height="3.4" fill="none" stroke="#c3cbd9" stroke-width="0.8"/><path d="M505 95.4 V112.2" stroke="#2e2e2e" stroke-width="0.8"/><path d="M504 98.6 L500.4 109 H504 Z" fill="#dcdcdc" stroke="#3a3a3a" stroke-width="0.7"/><path d="M506 98.6 L509.8 109 H506 Z" fill="#7a7a7a" stroke="#3a3a3a" stroke-width="0.7"/><ellipse cx="520.6" cy="102.6" rx="3.8" ry="6.6" fill="none" stroke="#2e2e2e" stroke-width="0.9"/><path d="M518.8 106.6 V101.6 Q520.6 98 522.4 101.6 V106.6 M520.6 102 V105" fill="none" stroke="#2e2e2e" stroke-width="0.8"/><path d="M516 110.6 Q518 108.6 520.2 110.8 Q522.6 112.6 525.6 110" fill="none" stroke="#2e2e2e" stroke-width="0.8"/></svg>
<div class="t" style="left:31px;top:71.40px;font-size:9.2px;color:#33415c;font-weight:bold;transform:scaleX(0.5580);">Simple Walking Robot</div>
<div class="btn" style="left:533.2px;top:94.4px;width:25.5px;height:18px;"></div>
<div class="t" style="left:539px;top:99.20px;font-size:8.8px;color:#5d6b82;font-weight:normal;transform:scaleX(0.5774);">Import</div>
<div class="btn" style="left:561.6px;top:94.4px;width:25.5px;height:18px;"></div>
<div class="t" style="left:567.6px;top:99.20px;font-size:8.8px;color:#5d6b82;font-weight:normal;transform:scaleX(0.5504);">Export</div>
<div class="btn" style="left:589.7px;top:94.4px;width:25.8px;height:18px;"></div>
<div class="t" style="left:594.5px;top:99.20px;font-size:8.8px;color:#5d6b82;font-weight:normal;transform:scaleX(0.5291);">Send To</div>
<div class="a" style="left:444.2px;top:125px;width:82.8px;height:103px;background:rgba(255,255,255,0.88);box-shadow:0 0.5px 1.5px rgba(0,0,0,0.12);"></div>
<div class="a" style="left:444.2px;top:125px;width:82.8px;height:22px;background:#fff;box-shadow:0 0.5px 1px rgba(0,0,0,0.08);"></div>
<div class="a" style="left:448px;top:155.3px;width:75px;height:0.6px;background:#e6e8ec;"></div>
<svg width="620" height="620" viewBox="0 0 620 620"><path d="M448.5 137.8 L450.6 133.6 L452.7 137.8" fill="none" stroke="#2c3a50" stroke-width="1.25"/><rect x="505.4" y="133.6" width="3.6" height="5.6" fill="#4a5a72"/><path d="M506.2 133.6 V131 Q507.8 128 509.2 131 V132" fill="none" stroke="#4a5a72" stroke-width="0.8"/><path d="M517.4 137 Q515.6 133.4 516.8 131 Q518.6 128 520.2 131 Q521.4 133.4 519.6 137 Z M517.6 138.4 H519.4 M518 139.8 H519" fill="none" stroke="#7a88a0" stroke-width="0.85"/><path d="M476 176.4 H502" stroke="#e6e8ec" stroke-width="0.7"/><ellipse cx="473.6" cy="176.3" rx="1.9" ry="3.1" fill="#fff" stroke="#3a3a3a" stroke-width="0.7"/><path d="M474 207.6 H502" stroke="#e6e8ec" stroke-width="0.7"/><path d="M474 207.6 H485" stroke="#4a80d8" stroke-width="0.9"/><ellipse cx="487.4" cy="207.6" rx="1.9" ry="3.1" fill="#fff" stroke="#3a3a3a" stroke-width="0.7"/></svg>
<div class="t" style="left:460.6px;top:131.20px;font-size:9.6px;color:#2c3a50;font-weight:bold;transform:scaleX(0.4902);">Axle connector</div>
<div class="t" style="left:448.2px;top:166.30px;font-size:7.8px;color:#6a7a90;font-weight:normal;transform:scaleX(0.5517);">Motor</div>
<div class="t" style="left:448.2px;top:174.30px;font-size:7.8px;color:#6a7a90;font-weight:normal;transform:scaleX(0.5283);">Torque</div>
<div class="t" style="left:448.2px;top:182.70px;font-size:7.8px;color:#6a7a90;font-weight:normal;transform:scaleX(0.5373);">(mNm)</div>
<div class="t" style="left:448.2px;top:198.70px;font-size:7.8px;color:#6a7a90;font-weight:normal;transform:scaleX(0.5239);">Motor Speed</div>
<div class="t" style="left:448.2px;top:206.90px;font-size:7.8px;color:#6a7a90;font-weight:normal;transform:scaleX(0.5060);">(RPM)</div>
<div class="t" style="left:517.3px;top:172.60px;font-size:7.6px;color:#6a7a90;font-weight:normal;transform:scaleX(0.4495);">0</div>
<div class="t" style="left:517.3px;top:203.90px;font-size:7.6px;color:#6a7a90;font-weight:normal;transform:scaleX(0.4495);">0</div>
<div class="a" style="left:498.8px;top:549px;width:28.2px;height:11px;background:rgba(255,255,255,0.8);border:0.5px solid #e2e4e8;box-sizing:border-box;"></div>
<div class="t" style="left:505.6px;top:550.80px;font-size:7.6px;color:#9aa2b0;font-weight:normal;transform:scaleX(0.5462);">Settings</div>
<div class="t" style="left:482.6px;top:568.80px;font-size:7.6px;color:#8a92a0;font-weight:normal;transform:scaleX(0.5260);">Snap Grid</div>
<div class="a" style="left:503px;top:567px;width:24px;height:11px;background:rgba(255,255,255,0.85);border:0.5px solid #e2e4e8;box-sizing:border-box;"></div>
<div class="t" style="left:505.4px;top:568.80px;font-size:7.6px;color:#9aa2b0;font-weight:normal;transform:scaleX(0.5130);">1.0 mm</div>
<div class="a" style="left:523px;top:571.6px;width:0;height:0;border-left:0.8px solid transparent;border-right:0.8px solid transparent;border-bottom:2px solid #444;"></div>
<div id="side" class="a"></div>
<div class="a" style="left:527.2px;top:338.6px;width:4.6px;height:27px;background:#f7f8fa;border:0.5px solid #e2e4e8;border-right:none;box-sizing:border-box;border-radius:1px 0 0 1px;"></div>
<svg width="620" height="620" viewBox="0 0 620 620"><path d="M529.4 346.4 L530.9 352.2 L529.4 358" fill="none" stroke="#2a2a2a" stroke-width="0.7"/><path d="M539.2 128.4 L551.6 126.2 V150 L539.2 147.6 Z" fill="#e6f3fb" stroke="#2a8fcf" stroke-width="0.9"/><path d="M541.27 128.03 V148.00" stroke="#2a8fcf" stroke-width="0.5"/><path d="M543.33 127.67 V148.40" stroke="#2a8fcf" stroke-width="0.5"/><path d="M545.40 127.30 V148.80" stroke="#2a8fcf" stroke-width="0.5"/><path d="M547.47 126.93 V149.20" stroke="#2a8fcf" stroke-width="0.5"/><path d="M549.53 126.57 V149.60" stroke="#2a8fcf" stroke-width="0.5"/><path d="M539.2 131.60 L551.6 130.17" stroke="#2a8fcf" stroke-width="0.6"/><path d="M539.2 134.80 L551.6 134.13" stroke="#2a8fcf" stroke-width="0.6"/><path d="M539.2 138.00 L551.6 138.10" stroke="#2a8fcf" stroke-width="0.6"/><path d="M539.2 141.20 L551.6 142.07" stroke="#2a8fcf" stroke-width="0.6"/><path d="M539.2 144.40 L551.6 146.03" stroke="#2a8fcf" stroke-width="0.6"/><path d="M569.4 128.2 L572.6 128.8 V144.8 L582 146.2 V150.6 L569.4 148.6 Z" fill="#e6f3fb" stroke="#2a8fcf" stroke-width="0.9"/><path d="M570.8 131.4 h1.2" stroke="#2a8fcf" stroke-width="0.6"/><path d="M570.8 134.6 h1.2" stroke="#2a8fcf" stroke-width="0.6"/><path d="M570.8 137.8 h1.2" stroke="#2a8fcf" stroke-width="0.6"/><path d="M570.8 141.0 h1.2" stroke="#2a8fcf" stroke-width="0.6"/><path d="M570.8 144.2 h1.2" stroke="#2a8fcf" stroke-width="0.6"/><path d="M574.4 147.0 v1.8" stroke="#2a8fcf" stroke-width="0.5"/><path d="M576.4 147.3 v1.8" stroke="#2a8fcf" stroke-width="0.5"/><path d="M578.4 147.6 v1.8" stroke="#2a8fcf" stroke-width="0.5"/><path d="M580.4 147.9 v1.8" stroke="#2a8fcf" stroke-width="0.5"/><path d="M600.6 127.6 H609.8 Q610.4 127.6 610.4 128.6 V144 Q610.4 145 609.8 145 H607.4 L605.2 149.8 L604.2 145 H601 Q600.2 145 600.2 144 V128.6 Q600.2 127.6 600.6 127.6 Z" fill="#eaf5fc" stroke="#2a8fcf" stroke-width="0.9"/><path d="M602.6 132.6 H608 M602.6 135.6 H608 M602.6 138.6 H607 M602.6 141.2 H606" stroke="#2a8fcf" stroke-width="0.6"/></svg>
<div class="a" style="left:534.8px;top:163px;width:65.8px;height:25.2px;background:#f6f7f9;box-shadow:0 0.5px 1.2px rgba(0,0,0,0.18);border-radius:1px;"></div>
<div class="a" style="left:602.3px;top:163px;width:14px;height:25.2px;background:#f6f7f9;box-shadow:0 0.5px 1.2px rgba(0,0,0,0.18);border-radius:1px;"></div>
<div class="t" style="left:537.6px;top:171.20px;font-size:8.8px;color:#5a6678;font-weight:normal;transform:scaleX(0.5452);">Sim Lab</div>
<svg width="620" height="620" viewBox="0 0 620 620"><path d="M594.9 174 L596.3 171 L597.7 174 Z M594.9 177 L596.3 180 L597.7 177 Z" fill="#1e1e1e"/><ellipse cx="608.4" cy="174.2" rx="2.9" ry="4.9" fill="none" stroke="#1e1e1e" stroke-width="1"/><path d="M610.4 178 L612.6 181.4" stroke="#1e1e1e" stroke-width="1.1"/></svg>
<div class="a" style="left:533px;top:195px;width:85px;height:34px;background:#f1f2f5;box-shadow:0 0.5px 1.2px rgba(0,0,0,0.18);border-radius:1px;"></div>
<div class="a" style="left:541.8px;top:226px;width:16.4px;height:2px;background:#4a80d8;"></div>
<svg width="620" height="620" viewBox="0 0 620 620"><rect x="545" y="202.4" width="10" height="19.6" rx="3.5" ry="5" fill="#fbfbfc"/><path d="M546 209.6 V205.2 H548.6 M551.2 205.2 H553.8 V209.6 M553.8 215 V219.4 H551.2 M548.6 219.4 H546 V215" fill="none" stroke="#6a7077" stroke-width="0.9"/><path d="M537.4 210 L536.4 211.8 L537.4 213.6" fill="none" stroke="#c8ccd4" stroke-width="0.6"/><path d="M613.4 210 L614.4 211.8 L613.4 213.6" fill="none" stroke="#b0b6c0" stroke-width="0.6"/></svg>
<div class="t" style="left:534.2px;top:238.90px;font-size:9px;color:#6a7a90;font-weight:normal;transform:scaleX(0.5798);">All</div>
<div class="a" style="left:579.2px;top:235.2px;width:38.8px;height:17.8px;background:#445268;border-radius:2.5px/3.5px;"></div>
<div class="a" style="left:601.4px;top:253px;width:0;height:0;border-left:1.7px solid transparent;border-right:1.7px solid transparent;border-top:3px solid #445268;"></div>
<div class="t" style="left:582.6px;top:238.90px;font-size:9.4px;color:#fff;font-weight:bold;transform:scaleX(0.4653);">Axle connector</div>
<div class="card" style="left:534.2px;top:258.9px;"></div>
<div class="card" style="left:562.2px;top:258.9px;"></div>
<div class="card" style="left:590.4px;top:258.5px;width:26.6px;height:53px;background:#f8f9fb;border:0.7px solid #88aeea;box-sizing:border-box;border-radius:1px;"></div>
<div class="card" style="left:534.2px;top:315.4px;"></div>
<div class="card" style="left:562.2px;top:315.4px;"></div>
<div class="card" style="left:590.4px;top:315.4px;"></div>
<div class="card" style="left:534.2px;top:375.5px;"></div>
<div class="card" style="left:562.2px;top:375.5px;"></div>
<div class="card" style="left:590.4px;top:375.5px;"></div>
<div class="card" style="left:534.2px;top:435px;"></div>
<div class="card" style="left:562.2px;top:435px;"></div>
<div class="card" style="left:590.4px;top:435px;"></div>
<svg width="620" height="620" viewBox="0 0 620 620"><defs><linearGradient id="rb" x1="0" y1="0" x2="1" y2="0" spreadMethod="repeat"><stop offset="0.000" stop-color="#e8402e"/><stop offset="0.083" stop-color="#e8402e"/><stop offset="0.083" stop-color="#2a7ad0"/><stop offset="0.167" stop-color="#2a7ad0"/><stop offset="0.167" stop-color="#f2c020"/><stop offset="0.250" stop-color="#f2c020"/><stop offset="0.250" stop-color="#3aa848"/><stop offset="0.333" stop-color="#3aa848"/><stop offset="0.333" stop-color="#e87820"/><stop offset="0.417" stop-color="#e87820"/><stop offset="0.417" stop-color="#2a9ad8"/><stop offset="0.500" stop-color="#2a9ad8"/><stop offset="0.500" stop-color="#d03a3a"/><stop offset="0.583" stop-color="#d03a3a"/><stop offset="0.583" stop-color="#48b058"/><stop offset="0.667" stop-color="#48b058"/><stop offset="0.667" stop-color="#f0a020"/><stop offset="0.750" stop-color="#f0a020"/><stop offset="0.750" stop-color="#3a6ac8"/><stop offset="0.833" stop-color="#3a6ac8"/><stop offset="0.833" stop-color="#e85a2a"/><stop offset="0.917" stop-color="#e85a2a"/><stop offset="0.917" stop-color="#58b848"/><stop offset="1.000" stop-color="#58b848"/></linearGradient><linearGradient id="rb2" x1="0" y1="0" x2="1" y2="0"><stop offset="0.000" stop-color="#1f6a8a"/><stop offset="0.071" stop-color="#1f6a8a"/><stop offset="0.071" stop-color="#2a9a68"/><stop offset="0.143" stop-color="#2a9a68"/><stop offset="0.143" stop-color="#c84a2a"/><stop offset="0.214" stop-color="#c84a2a"/><stop offset="0.214" stop-color="#1f78b8"/><stop offset="0.286" stop-color="#1f78b8"/><stop offset="0.286" stop-color="#3a9a4a"/><stop offset="0.357" stop-color="#3a9a4a"/><stop offset="0.357" stop-color="#d8a820"/><stop offset="0.429" stop-color="#d8a820"/><stop offset="0.429" stop-color="#1f6aa8"/><stop offset="0.500" stop-color="#1f6aa8"/><stop offset="0.500" stop-color="#2a8a7a"/><stop offset="0.571" stop-color="#2a8a7a"/><stop offset="0.571" stop-color="#1a5a98"/><stop offset="0.643" stop-color="#1a5a98"/><stop offset="0.643" stop-color="#c8502a"/><stop offset="0.714" stop-color="#c8502a"/><stop offset="0.714" stop-color="#e8b020"/><stop offset="0.786" stop-color="#e8b020"/><stop offset="0.786" stop-color="#2a8a58"/><stop offset="0.857" stop-color="#2a8a58"/><stop offset="0.857" stop-color="#d85a2a"/><stop offset="0.929" stop-color="#d85a2a"/><stop offset="0.929" stop-color="#e8a020"/><stop offset="1.000" stop-color="#e8a020"/></linearGradient><pattern id="mz" width="2.2" height="3.2" patternUnits="userSpaceOnUse"><rect width="1.1" height="1.6" fill="#d8402e"/><rect x="1.1" width="1.1" height="1.6" fill="#2a7ad0"/><rect y="1.6" width="1.1" height="1.6" fill="#3aa848"/><rect x="1.1" y="1.6" width="1.1" height="1.6" fill="#e8a820"/></pattern></defs><path d="M548 298 Q541.6 292 542 286 Q542.8 279 548 278.8 Q553.6 279 554.2 286 Q554.4 292 548 298 Z" fill="#f5f5f5" stroke="#c8ccd0" stroke-width="0.3"/><path d="M547 297.6 Q541.4 292 542 286 Q542.6 280.4 546 279.2 Q543.6 284 544.6 289 Q545.6 293.4 549.6 296 Q548.6 297.6 547 297.6 Z" fill="#ee7d1c"/><path d="M546.6 294 Q548 298.6 549.6 294.6 Z" fill="#ee7d1c"/><path d="M550 280 Q553.6 281.6 554 286 Q552.6 282.6 550 282 Z" fill="#ee7d1c"/><ellipse cx="548.6" cy="284.6" rx="3" ry="3.7" fill="#1aa0f0"/><rect x="545.5" y="271.5" width="3.5" height="8.6" rx="1.4" ry="1.6" fill="#1f8ed8"/><rect x="545.5" y="277.6" width="3.5" height="1.2" fill="#e8eef4"/><rect x="571.7" y="281.4" width="7.7" height="18.2" rx="1.8" ry="2.4" fill="#ee7d1c"/><rect x="573.4" y="290.8" width="6" height="4" fill="#f2f2f2"/><rect x="573.7" y="277" width="3.8" height="7.4" rx="0.8" fill="#f2f2f2"/><rect x="573.7" y="279.4" width="3.8" height="2" fill="#1f8ed8"/><rect x="573.7" y="270" width="3.7" height="7.6" rx="1.4" ry="1.6" fill="#1f8ed8"/><ellipse cx="603.2" cy="292.6" rx="6.1" ry="7.2" fill="#f5f5f5" stroke="#c8ccd0" stroke-width="0.3"/><path d="M603.2 292.6 L601.4 285.8 A6.1 7.2 0 0 0 599.4 298.2 Z" fill="#ee7d1c"/><path d="M603.2 292.6 L605.4 285.8 A6.1 7.2 0 0 1 609.3 292 Z" fill="#ee7d1c"/><path d="M599.4 298.2 A6.1 7.2 0 0 0 603.8 299.8 L603.2 296 Z" fill="#ee7d1c"/><rect x="601.7" y="272.5" width="3.5" height="15.8" rx="1.4" ry="1.6" fill="#1f8ed8"/><rect x="601.7" y="280.4" width="3.5" height="1.4" fill="#eef2f6"/><rect x="601.7" y="284.4" width="3.5" height="1.6" fill="#eef2f6"/><path d="M611.7 263 L612.7 266.6 L614.9 266.8 L613.3 269 L613.7 272.4 L611.7 270.8 L609.7 272.4 L610.1 269 L608.5 266.8 L610.7 266.6 Z" fill="none" stroke="#d0d4da" stroke-width="0.6"/><path d="M540.8 340.4 V345 A6.6 5.6 0 0 0 554 345 V340.4 Z" fill="#f2f2f2" stroke="#c8ccd0" stroke-width="0.3"/><path d="M540.8 340.4 V345 A6.6 5.6 0 0 0 545 349.6 V345 Z" fill="#ee7d1c"/><ellipse cx="547.4" cy="340.4" rx="6.6" ry="5.8" fill="#f7f7f7" stroke="#b8bcc0" stroke-width="0.35"/><path d="M547.4 340.4 L541 342 A6.6 5.8 0 0 1 544 335.4 Z" fill="#ee7d1c"/><path d="M547.4 340.4 L550 335 A6.6 5.8 0 0 1 554 340 Z" fill="#ee7d1c"/><ellipse cx="547.6" cy="340.6" rx="3.3" ry="3" fill="#1aa0f0"/><g transform="translate(566.5 337.3) rotate(16.5)"><rect x="0" y="0" width="19.2" height="4.5" fill="url(#rb2)"/></g><ellipse cx="603" cy="342.4" rx="6.6" ry="7.6" fill="url(#mz)"/><ellipse cx="603" cy="342.4" rx="6.6" ry="7.6" fill="#1a3a2a" opacity="0.28"/><ellipse cx="603" cy="342.4" rx="5" ry="5.8" fill="none" stroke="#2a4a3a" stroke-width="0.6" opacity="0.5"/><ellipse cx="603" cy="342.4" rx="3.4" ry="4" fill="none" stroke="#5a3a2a" stroke-width="0.5" opacity="0.5"/><g transform="translate(547 401.8)"><ellipse rx="7" ry="8" fill="url(#rb)"/><ellipse cx="0.2" cy="-0.8" rx="4.1" ry="3.3" fill="#f5f6f8"/></g><path d="M571.6 391.4 L578.6 390.8 L581.2 397 L578 412.6 L571 411.6 L569 405.6 Z" fill="#3cb84a"/><path d="M571.2 399.4 L579.6 399 L578.8 404.6 L570.2 404.6 Z" fill="#7a8088"/><path d="M569.2 406 L571 411.6 L578 412.6 L578.2 410.6 L571.6 409.6 Z" fill="#2a2a2a"/><path d="M579 396 L581.2 397 L580 404 L579 404 Z" fill="#2a8a3a"/><path d="M569.4 405.8 L570.8 410.6 L577.8 411.4 L578.2 407.6 Z" fill="#e8e8e8" opacity="0.5"/><path d="M596.4 386.8 L610.2 390.8 L609.8 392.6 L596 388.6 Z" fill="#8a9098"/><path d="M598.2 404.6 Q603 400.6 610.6 400.2 L610.8 402.6 Q604 403 599 406.4 Z" fill="url(#rb)"/><path d="M597 408.8 L610 414.4 L608.6 420 L596.2 414.4 Z" fill="#d0d4d8" stroke="#8a9098" stroke-width="0.4"/><path d="M550 456 Q545 453 545 458 Q545.4 461.6 548 462.6 Q551.4 464.6 549.6 468.6 Q547.6 471 544.6 469.4" fill="none" stroke="url(#rb)" stroke-width="2.4"/><path d="M570.6 454.2 L583.2 457 L581.4 469.2 L568.2 466 Z" fill="url(#mz)"/><path d="M568.2 466 L570.6 454.2 L569.4 455 L567 465 Z" fill="#2a5aa0"/><path d="M596 462 L610.6 456.4 L611.2 458.8 L596.6 464.6 Z" fill="#1f8ed8"/><ellipse cx="596.2" cy="463.2" rx="1.3" ry="2" fill="#e87820"/><path d="M608.4 456 L610.2 456 L608 472.6 L606.6 472.4 Z" fill="#6a3aa8"/><path d="M609.6 456 L611 456 L611.8 470.6 L610.6 470.6 Z" fill="#7a3ab0"/><rect x="611.2" y="457" width="1.6" height="7" fill="#f08a20"/></svg>
<div class="a" style="left:556px;top:493.6px;width:38.6px;height:22.4px;background:#4a80d8;border-radius:6px/10px;"></div>
<div class="t" style="left:561.8px;top:500.30px;font-size:9px;color:#fff;font-weight:normal;transform:scaleX(0.5044);">More Shapes</div>
<div id="task" class="a"></div>
<svg width="620" height="620" viewBox="0 0 620 620"><path d="M8 606.6 Q7.4 601 10.4 600.4 Q11 595.6 14 596.6 Q17.6 597 17.4 602 Q18.8 606.6 15 607.6 H9.6 Q8 607.8 8 606.6 Z" fill="#c8d8f4"/><ellipse cx="15.8" cy="595.4" rx="2.9" ry="5.2" fill="#e03a2e"/><rect x="126.6" y="594.4" width="4.8" height="8" fill="#2aa8f0"/><rect x="131.9" y="594.4" width="4.8" height="8" fill="#2aa8f0"/><rect x="126.6" y="603.2" width="4.8" height="8" fill="#2aa8f0"/><rect x="131.9" y="603.2" width="4.8" height="8" fill="#2aa8f0"/><rect x="142" y="590.8" width="88.6" height="22.8" rx="6.5" ry="11.4" fill="#f1f0f5"/><ellipse cx="149.4" cy="601.4" rx="2.2" ry="3.9" fill="none" stroke="#2a2a2a" stroke-width="0.9"/><path d="M150.8 604.6 L152.4 607.4" stroke="#2a2a2a" stroke-width="1"/><path d="M213.5 611 V600 M218 611 V596.6 M223 611 V599 M220.6 611 V603" stroke="#9aa4b4" stroke-width="0.7"/><ellipse cx="213.5" cy="601" rx="1.7" ry="1.8" fill="#b4c0d0" opacity="0.9"/><ellipse cx="213.5" cy="605" rx="1.7" ry="1.8" fill="#b4c0d0" opacity="0.9"/><ellipse cx="218" cy="598" rx="1.7" ry="1.8" fill="#b4c0d0" opacity="0.9"/><ellipse cx="218" cy="602" rx="1.7" ry="1.8" fill="#b4c0d0" opacity="0.9"/><ellipse cx="218" cy="606" rx="1.7" ry="1.8" fill="#b4c0d0" opacity="0.9"/><ellipse cx="223" cy="600.5" rx="1.7" ry="1.8" fill="#b4c0d0" opacity="0.9"/><ellipse cx="223" cy="604.5" rx="1.7" ry="1.8" fill="#b4c0d0" opacity="0.9"/><ellipse cx="216" cy="603.5" rx="1.7" ry="1.8" fill="#b4c0d0" opacity="0.9"/><ellipse cx="220.6" cy="605" rx="1.7" ry="1.8" fill="#b4c0d0" opacity="0.9"/><ellipse cx="218" cy="611" rx="7.4" ry="1.2" fill="#c8b498"/><rect x="237.8" y="595" width="7.8" height="11" rx="0.8" fill="#f0f0f0"/><rect x="234.8" y="598.6" width="7.8" height="11" rx="0.8" fill="#8a8a90"/><rect x="253.2" y="598.4" width="9.2" height="12.6" rx="1" fill="#f4f4f6"/><path d="M255.6 598.4 V596.4 Q257.8 594 260 596.4 V598.4" fill="none" stroke="#5ab0e8" stroke-width="0.8"/><rect x="255.6" y="601.4" width="2" height="3.2" fill="#f25022"/><rect x="258" y="601.4" width="2" height="3.2" fill="#7fba00"/><rect x="255.6" y="605" width="2" height="3.2" fill="#00a4ef"/><rect x="258" y="605" width="2" height="3.2" fill="#ffb900"/><path d="M270.4 595.4 H275 L276 597.4 H281.2 V610.6 H270.4 Z" fill="#f4b400"/><rect x="270.4" y="599" width="10.8" height="11.6" fill="#ffd24a"/><rect x="273" y="606.6" width="5.6" height="4" fill="#3a8ad8"/><ellipse cx="275.6" cy="615" rx="0.7" ry="1" fill="#b0b0b8"/><ellipse cx="293" cy="602.6" rx="5.1" ry="8.8" fill="#1b3a6a"/><ellipse cx="294.6" cy="600" rx="1.8" ry="3" fill="none" stroke="#fff" stroke-width="0.8"/><path d="M288.4 603.6 L292 606.4" stroke="#fff" stroke-width="1.6"/><ellipse cx="291.6" cy="606.4" rx="1.3" ry="2" fill="#fff"/><rect x="306" y="594.4" width="11.2" height="16.6" rx="1" fill="#14181e"/><path d="M309 598 L311.6 607 L314.2 598" fill="none" stroke="#8ab0c8" stroke-width="0.8"/><path d="M308 596 L309.6 604 M315.2 596 L313.6 604" stroke="#4a6a80" stroke-width="0.6"/><rect x="320.6" y="588.2" width="16.4" height="29.6" rx="1.5" fill="#3a3450"/><ellipse cx="328.7" cy="602.4" rx="5" ry="8.8" fill="#e8eaee"/><path d="M328.7 602.4 L324.37 598 A5 8.8 0 0 1 333.03 598 Z" fill="#ea4335"/><path d="M328.7 593.6 A5 8.8 0 0 1 333.03 598 L328.7 598 Z" fill="#ea4335"/><path d="M324.37 598 A5 8.8 0 0 0 328.7 611.2 L331 605 L328.7 602.4 Z" fill="#34a853"/><path d="M333.03 598 A5 8.8 0 0 1 328.7 611.2 L331.2 604.6 L331 598 Z" fill="#fbbc04"/><ellipse cx="328.7" cy="602.4" rx="2.3" ry="4" fill="#fff"/><ellipse cx="328.7" cy="602.4" rx="1.8" ry="3.2" fill="#4285f4"/><rect x="325.6" y="614.8" width="6.4" height="1.8" rx="0.6" fill="#5ab4f4"/><path d="M345.4 598.4 L350 594.6 L353.2 598.4 V609 H345.4 Z" fill="#2a8ae0"/><rect x="342" y="598.4" width="6.6" height="10" rx="0.8" fill="#0f5fb8"/><ellipse cx="345.3" cy="603.4" rx="1.5" ry="2.6" fill="none" stroke="#fff" stroke-width="0.9"/><path d="M348.6 609 L353.2 602 V609 Z" fill="#5ab8f4"/><rect x="360" y="595" width="9.8" height="16" rx="1.6" ry="2.4" fill="#2a6ad8"/><path d="M366.6 600.4 Q363.2 597.6 363.2 603 Q363.2 608.4 366.6 605.8" fill="none" stroke="#fff" stroke-width="1.2"/><rect x="377.4" y="594.2" width="9.8" height="17" rx="0.8" fill="#f4f4f4"/><rect x="378.4" y="596.0" width="2.2" height="2.8" fill="#e8503a"/><rect x="381.1" y="596.0" width="2.2" height="2.8" fill="#f4a020"/><rect x="383.8" y="596.0" width="2.2" height="2.8" fill="#f4d020"/><rect x="378.4" y="599.5" width="2.2" height="2.8" fill="#4ab04a"/><rect x="381.1" y="599.5" width="2.2" height="2.8" fill="#2a8ad8"/><rect x="383.8" y="599.5" width="2.2" height="2.8" fill="#8a4ac8"/><rect x="378.4" y="603.0" width="2.2" height="2.8" fill="#e86aa0"/><rect x="381.1" y="603.0" width="2.2" height="2.8" fill="#50c0c0"/><rect x="383.8" y="603.0" width="2.2" height="2.8" fill="#f47820"/><rect x="378.4" y="606.5" width="2.2" height="2.8" fill="#a0c838"/><rect x="381.1" y="606.5" width="2.2" height="2.8" fill="#3a6ae0"/><rect x="383.8" y="606.5" width="2.2" height="2.8" fill="#e83a6a"/><ellipse cx="400.6" cy="602.6" rx="4.4" ry="8.6" fill="#2a5ab8"/><path d="M402.6 594 L398 603.4 H400.6 L398.4 611.6 L403.6 601 H400.8 Z" fill="#f8c820"/><rect x="410" y="588" width="15.6" height="29.4" rx="1.5" fill="#70343e"/><rect x="414.6" y="595" width="7.8" height="15.6" rx="0.8" fill="#2a7ad8"/><rect x="414.6" y="602.8" width="7.8" height="7.8" fill="#1a4a9a"/><rect x="412.6" y="598.6" width="5.6" height="8.6" rx="0.6" fill="#1a5ab8"/><path d="M413.6 600.6 L414.6 605.2 L415.4 601.8 L416.2 605.2 L417.2 600.6" fill="none" stroke="#fff" stroke-width="0.6"/><ellipse cx="417.6" cy="615" rx="0.8" ry="1.1" fill="#f0605a"/><ellipse cx="435.6" cy="602.6" rx="4.2" ry="7.6" fill="#8a9ab0"/><ellipse cx="435.6" cy="602.6" rx="4.6" ry="8.4" fill="none" stroke="#8a9ab0" stroke-width="1.2" stroke-dasharray="1.8 1.6"/><ellipse cx="435.6" cy="602.6" rx="2" ry="3.6" fill="#3a6ad0"/><ellipse cx="435.6" cy="615" rx="0.7" ry="1" fill="#b0b0b8"/><rect x="448" y="594.6" width="10.4" height="16.6" rx="1.4" ry="2" fill="#2a7ae0"/><path d="M448.6 610.6 L453 600 L455.6 605 L456.8 603.4 L458 610.6 Z" fill="#9ad8f8"/><path d="M448.6 610.6 L453 600 L455 610.6 Z" fill="#5ab8f0"/><ellipse cx="453.2" cy="615" rx="0.7" ry="1" fill="#b0b0b8"/><path d="M489.6 604.4 L491.6 600.6 L493.6 604.4" fill="none" stroke="#f0f0f0" stroke-width="0.9"/><path d="M501.6 605.6 Q501 602 503 601.6 Q504.4 597.8 506.6 600.6 Q508.6 601 508 605.6 Z" fill="#f0f0f0"/><path d="M519 597.6 A2.8 5 0 1 0 519.6 606" fill="none" stroke="#e8e8e8" stroke-width="0.9"/><ellipse cx="518.6" cy="607.4" rx="1.5" ry="2.4" fill="#3a8af0"/><rect x="527.6" y="597.4" width="1.9" height="9.6" fill="#e03a2e"/><rect x="530.2" y="597.4" width="1.6" height="2.8" fill="#f4f4f4"/><rect x="530.2" y="601" width="1.6" height="2.8" fill="#e03a2e"/><path d="M558.6 600.8 Q561.6 595.6 564.6 600.8 M559.6 603 Q561.6 599.6 563.6 603" fill="none" stroke="#f0f0f0" stroke-width="0.8"/><ellipse cx="561.6" cy="605.8" rx="0.8" ry="1.3" fill="#f0f0f0"/><path d="M569 600.6 H570.4 L572 597.6 V608.2 L570.4 605.2 H569 Z" fill="#f0f0f0"/><path d="M573.2 599.6 Q574.6 602.8 573.2 606.2" fill="none" stroke="#f0f0f0" stroke-width="0.7"/><rect x="577.6" y="599.4" width="5.8" height="8" rx="0.8" fill="none" stroke="#f0f0f0" stroke-width="0.8"/><rect x="578.4" y="601.4" width="3.4" height="5.2" fill="#f0f0f0"/><path d="M579 597.4 v2 M580.8 597.4 v2" stroke="#f0f0f0" stroke-width="0.7"/></svg>
<div class="t" style="left:15.1px;top:592.40px;font-size:6.4px;color:#fff;font-weight:bold;transform:scaleX(0.4495);">1</div>
<div class="t" style="left:21.2px;top:592.50px;font-size:8.6px;color:#f4f4f4;font-weight:normal;transform:scaleX(0.4850);">7°C</div>
<div class="t" style="left:21.2px;top:603.70px;font-size:8.6px;color:#d8d8e0;font-weight:normal;transform:scaleX(0.5603);">Cloudy</div>
<div class="t" style="left:156.6px;top:597.80px;font-size:10px;color:#5a5a62;font-weight:normal;transform:scaleX(0.5302);">Search</div>
<div class="t" style="left:540.9px;top:598.40px;font-size:8.4px;color:#f0f0f0;font-weight:normal;transform:scaleX(0.5494);">ENG</div>
<div class="t" style="left:594.5px;top:592.40px;font-size:8.8px;color:#f4f4f4;font-weight:normal;transform:scaleX(0.5513);">2:53 AM</div>
<div class="t" style="left:591px;top:603.40px;font-size:8.8px;color:#f4f4f4;font-weight:normal;transform:scaleX(0.5375);">26-Jan-25</div>
</body></html>
